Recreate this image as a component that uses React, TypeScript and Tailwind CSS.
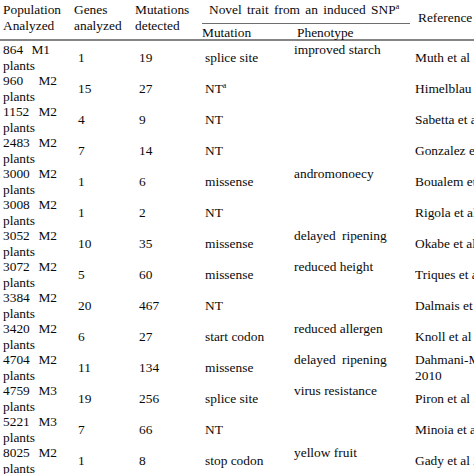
import React from "react";

type Row = {
  n: string;
  m: string;
  genes: string;
  muts: string;
  mutation: React.ReactNode;
  pheno: string;
  ref: React.ReactNode;
  narrow?: boolean;
  wide?: boolean;
};

const Sup = () => <sup className="text-[8px] relative -top-[5px]">a</sup>;

const rows: Row[] = [
  { n: "864", m: "M1", genes: "1", muts: "19", mutation: "splice site", pheno: "improved starch", ref: "Muth et al 2008", narrow: true },
  { n: "960", m: "M2", genes: "15", muts: "27", mutation: (<>NT<Sup /></>), pheno: "", ref: "Himelblau et al 2009" },
  { n: "1152", m: "M2", genes: "4", muts: "9", mutation: "NT", pheno: "", ref: "Sabetta et al 2011" },
  { n: "2483", m: "M2", genes: "7", muts: "14", mutation: "NT", pheno: "", ref: "Gonzalez et al 2011" },
  { n: "3000", m: "M2", genes: "1", muts: "6", mutation: "missense", pheno: "andromonoecy", ref: "Boualem et al 2008" },
  { n: "3008", m: "M2", genes: "1", muts: "2", mutation: "NT", pheno: "", ref: "Rigola et al 2009" },
  { n: "3052", m: "M2", genes: "10", muts: "35", mutation: "missense", pheno: "delayed ripening", ref: "Okabe et al 2011", wide: true },
  { n: "3072", m: "M2", genes: "5", muts: "60", mutation: "missense", pheno: "reduced height", ref: "Triques et al 2007" },
  { n: "3384", m: "M2", genes: "20", muts: "467", mutation: "NT", pheno: "", ref: "Dalmais et al 2008" },
  { n: "3420", m: "M2", genes: "6", muts: "27", mutation: "start codon", pheno: "reduced allergen", ref: "Knoll et al 2009" },
  { n: "4704", m: "M2", genes: "11", muts: "134", mutation: "missense", pheno: "delayed ripening", ref: (<>Dahmani-Mardas et al<br />2010</>), wide: true },
  { n: "4759", m: "M3", genes: "19", muts: "256", mutation: "splice site", pheno: "virus resistance", ref: "Piron et al 2010" },
  { n: "5221", m: "M3", genes: "7", muts: "66", mutation: "NT", pheno: "", ref: "Minoia et al 2010" },
  { n: "8025", m: "M2", genes: "1", muts: "8", mutation: "stop codon", pheno: "yellow fruit", ref: "Gady et al 2009" },
];

export default function App() {
  return (
    <div className="w-[474px] h-[474px] overflow-hidden bg-white text-[#0a0a0a] text-[13.4px] leading-[15.5px] font-['Liberation_Serif','Times_New_Roman',serif]">
      {/* Header */}
      <div className="flex h-[41px] border-b-2 border-[#858585] whitespace-nowrap">
        <div className="w-[74px] pl-[3px] pt-[2px]">
          Population
          <br />
          Analyzed
        </div>
        <div className="w-[61px] pt-[2px]">
          Genes
          <br />
          analyzed
        </div>
        <div className="w-[67px] pt-[2px]">
          Mutations
          <br />
          detected
        </div>
        <div className="w-[208px] flex flex-col">
          <div className="pl-[7px] pt-[2px] pb-[5px] border-b border-[#6e6e6e] [word-spacing:2px]">
            Novel trait from an induced SNP
            <Sup />
          </div>
          <div className="flex pt-[1px]">
            <div className="w-[95px]">Mutation</div>
            <div>Phenotype</div>
          </div>
        </div>
        <div className="pl-[8px] pt-[10px]">Reference</div>
      </div>

      {/* Body */}
      <div className="flex flex-col pt-[1px]">
        {rows.map((r) => (
          <div key={r.n} className="flex items-center h-[31px] whitespace-nowrap">
            <div className="w-[78px] pl-[3px] self-start">
              <div className={`flex justify-between ${r.narrow ? "w-[47px]" : "w-[54px]"}`}>
                <span>{r.n}</span>
                <span>{r.m}</span>
              </div>
              <div>plants</div>
            </div>
            <div className="w-[61px]">{r.genes}</div>
            <div className="w-[66px]">{r.muts}</div>
            <div className="w-[89px]">{r.mutation}</div>
            <div className={`w-[121px] self-start ${r.wide ? "[word-spacing:3px]" : ""}`}>{r.pheno}</div>
            <div className="flex-1 overflow-hidden">{r.ref}</div>
          </div>
        ))}
      </div>
    </div>
  );
}
